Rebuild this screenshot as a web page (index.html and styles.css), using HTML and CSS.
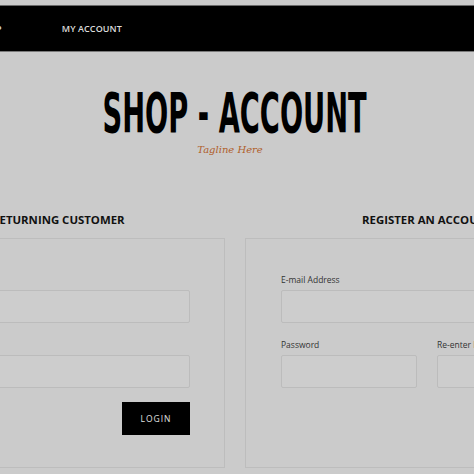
FILE: index.html
```html
<!DOCTYPE html>
<html>
<head>
<meta charset="utf-8">
<link rel="stylesheet" href="styles.css">
</head>
<body>
<header class="topbar">
  <nav class="nav">
    <a class="nav-item" href="#">SHOP</a>
    <a class="nav-item" href="#">MY ACCOUNT</a>
  </nav>
</header>
<section class="hero">
  <h1 class="title"><span class="title-inner">SHOP - ACCOUNT</span></h1>
  <p class="tagline">Tagline Here</p>
</section>
<main class="columns">
  <div class="col">
    <h2 class="col-title">RETURNING CUSTOMER</h2>
    <div class="box">
      <label class="label">E-mail Address</label>
      <div class="input"></div>
      <label class="label">Password</label>
      <div class="input"></div>
      <div class="actions"><button class="btn">LOGIN</button></div>
    </div>
  </div>
  <div class="col col-right">
    <h2 class="col-title">REGISTER AN ACCOUNT</h2>
    <div class="box">
      <label class="label">E-mail Address</label>
      <div class="input"></div>
      <div class="pair">
        <div class="field">
          <label class="label">Password</label>
          <div class="input"></div>
        </div>
        <div class="field">
          <label class="label">Re-enter Password</label>
          <div class="input"></div>
        </div>
      </div>
    </div>
  </div>
</main>
</body>
</html>
```
FILE: styles.css
```css
* { box-sizing: border-box; }
html, body { margin: 0; padding: 0; }
body {
  background: #cbcbcb;
  width: 474px;
  height: 474px;
  overflow: hidden;
  font-family: "Open Sans", "DejaVu Sans", sans-serif;
}
.topbar {
  margin-top: 5px;
  height: 47px;
  background: #000;
  border-top: 1px solid #6a6a6a;
  border-bottom: 1px solid #7a7a7a;
  display: flex;
  align-items: center;
}
.nav {
  display: flex;
  gap: 60px;
  margin-left: -23px;
}
.nav-item {
  color: #dcdcdc;
  text-decoration: none;
  font-size: 9px;
  font-weight: 600;
  letter-spacing: 0.1px;
}
.hero {
  text-align: center;
  padding-top: 36px;
  padding-right: 14px;
}
.title {
  margin: 0;
  height: 50px;
  line-height: 50px;
  padding-left: 9px;
  display: flex;
  justify-content: center;
  font-family: "DejaVu Sans Condensed", "DejaVu Sans", sans-serif;
  font-weight: bold;
  font-size: 56px;
  color: #000;
}
.title-inner {
  display: inline-block;
  flex: none;
  transform: scaleX(0.542);
  white-space: nowrap;
}
.tagline {
  margin: 6px 0 0;
  font-family: "DejaVu Serif", serif;
  font-style: italic;
  font-size: 10px;
  color: #b0602c;
}
.columns {
  display: grid;
  grid-template-columns: 350px 380px;
  gap: 20px;
  margin-left: -125px;
  margin-top: 56px;
}
.col-title {
  margin: 0 0 9px;
  padding-left: 117px;
  font-size: 11.4px;
  font-weight: 700;
  color: #111;
  height: 18px;
  line-height: 18px;
}
.box {
  border: 1px solid #bdbdbd;
  padding: 34px 34px 33px 35px;
  height: 230px;
}
.label {
  display: block;
  font-size: 8.5px;
  color: #333;
  height: 17px;
  line-height: 14px;
}
.input {
  height: 33px;
  border: 1px solid #bcbcbc;
  border-radius: 2px;
  background: #cdcdcd;
  margin-bottom: 15px;
}
.actions {
  display: flex;
  justify-content: flex-end;
  margin-top: -1px;
}
.btn {
  width: 68px;
  height: 33px;
  background: #000;
  color: #e0e0e0;
  border: none;
  font-family: "Open Sans", sans-serif;
  font-size: 8.5px;
  letter-spacing: 1px;
  padding: 0;
}
.col-right .box {
  padding-right: 40px;
}
.pair {
  display: flex;
  gap: 20px;
}
.field { width: 136px; }
```
